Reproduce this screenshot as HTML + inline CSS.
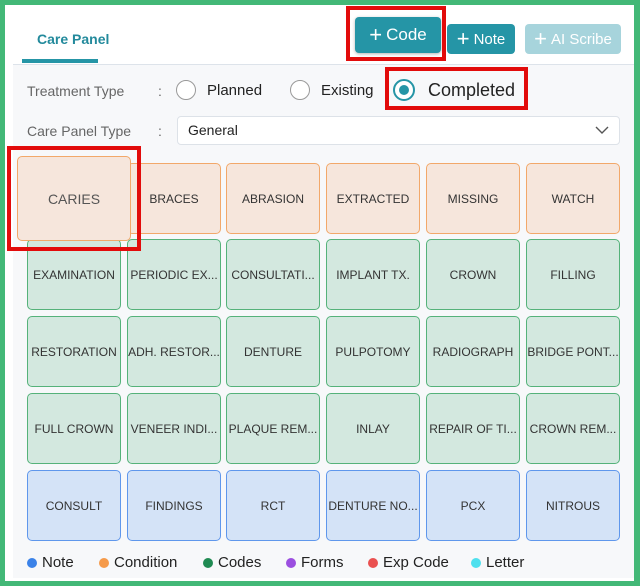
<!DOCTYPE html>
<html><head><style>
*{box-sizing:border-box;margin:0;padding:0}
body{width:640px;height:586px;background:#43b877;position:relative;font-family:"Liberation Sans",sans-serif;overflow:hidden}
.panel{position:absolute;left:5px;top:5px;width:629px;height:576px;background:#fff}
.gray{position:absolute;left:13px;top:64px;width:621px;height:514px;background:#f7f8fa;border-top:1px solid #dde3ea}
.a{position:absolute}
.tab{left:37px;top:31px;font-size:14px;font-weight:bold;color:#238a9c}
.ul{left:22px;top:59px;width:76px;height:4px;background:#2595a6}
.btn{position:absolute;color:#fff;border-radius:4px;font-size:15px;display:flex;align-items:center;justify-content:center;gap:4px}
.btn b{font-weight:normal;font-size:22px;line-height:1}
.red{position:absolute;border:4px solid #e20b0b}
.lbl{font-size:14px;color:#666}
.rad{position:absolute;width:20px;height:20px;border:1px solid #999;border-radius:50%;background:#fff}
.rt{font-size:15px;color:#222}
.cell{position:absolute;width:94px;height:71px;border-radius:5px;display:flex;align-items:center;justify-content:center;font-size:12px;color:#333;white-space:nowrap;overflow:hidden}
.o{background:#f6e6dc;border:1px solid #f2a86a}
.g{background:#d3e8df;border:1px solid #55b27a}
.b{background:#d4e3f7;border:1px solid #5f97ec}
.leg{position:absolute;top:554px;font-size:15px;color:#222;display:flex;align-items:center;gap:5px}
.leg i{display:inline-block;width:10px;height:10px;border-radius:50%}
</style></head><body>
<div class="panel"></div>
<div class="gray"></div>
<div class="a tab">Care Panel</div>
<div class="a ul"></div>

<div class="btn" style="left:355px;top:17px;width:86px;height:36px;background:#2595a6;font-size:17px;box-shadow:0 1px 3px rgba(0,0,0,.3)"><b>+</b>Code</div>
<div class="red" style="left:346px;top:6px;width:100px;height:55px"></div>
<div class="btn" style="left:447px;top:24px;width:68px;height:30px;background:#2595a6"><b>+</b>Note</div>
<div class="btn" style="left:525px;top:24px;width:96px;height:30px;background:#a7d4dc"><b>+</b>AI Scribe</div>

<div class="a lbl" style="left:27px;top:83px">Treatment Type</div>
<div class="a lbl" style="left:158px;top:83px">:</div>
<div class="rad" style="left:176px;top:80px"></div>
<div class="a rt" style="left:207px;top:82px">Planned</div>
<div class="rad" style="left:290px;top:80px"></div>
<div class="a rt" style="left:321px;top:82px">Existing</div>
<div class="rad" style="left:393px;top:79px;width:22px;height:22px;border:2px solid #2595a6"><div style="position:absolute;left:4px;top:4px;width:10px;height:10px;border-radius:50%;background:#2595a6"></div></div>
<div class="a" style="left:428px;top:80px;font-size:18px;color:#222">Completed</div>
<div class="red" style="left:385px;top:67px;width:143px;height:43px"></div>

<div class="a lbl" style="left:27px;top:123px">Care Panel Type</div>
<div class="a lbl" style="left:158px;top:123px">:</div>
<div class="a" style="left:177px;top:116px;width:443px;height:29px;background:#fff;border:1px solid #dde2e8;border-radius:4px"></div>
<div class="a rt" style="left:188px;top:122px;font-size:14px">General</div>
<svg class="a" style="left:595px;top:125px" width="14" height="10"><path d="M1 2l6 6 6-6" fill="none" stroke="#555" stroke-width="1.4"/></svg>

<div class="cell o" style="left:127px;top:163px">BRACES</div>
<div class="cell o" style="left:226px;top:163px">ABRASION</div>
<div class="cell o" style="left:326px;top:163px">EXTRACTED</div>
<div class="cell o" style="left:426px;top:163px">MISSING</div>
<div class="cell o" style="left:526px;top:163px">WATCH</div>

<div class="cell g" style="left:27px;top:239px">EXAMINATION</div>
<div class="cell g" style="left:127px;top:239px">PERIODIC EX...</div>
<div class="cell g" style="left:226px;top:239px">CONSULTATI...</div>
<div class="cell g" style="left:326px;top:239px">IMPLANT TX.</div>
<div class="cell g" style="left:426px;top:239px">CROWN</div>
<div class="cell g" style="left:526px;top:239px">FILLING</div>

<div class="cell o" style="left:17px;top:156px;width:114px;height:85px;font-size:14px;color:#555">CARIES</div>
<div class="red" style="left:7px;top:146px;width:134px;height:105px"></div>

<div class="cell g" style="left:27px;top:316px">RESTORATION</div>
<div class="cell g" style="left:127px;top:316px">ADH. RESTOR...</div>
<div class="cell g" style="left:226px;top:316px">DENTURE</div>
<div class="cell g" style="left:326px;top:316px">PULPOTOMY</div>
<div class="cell g" style="left:426px;top:316px">RADIOGRAPH</div>
<div class="cell g" style="left:526px;top:316px">BRIDGE PONT...</div>

<div class="cell g" style="left:27px;top:393px">FULL CROWN</div>
<div class="cell g" style="left:127px;top:393px">VENEER INDI...</div>
<div class="cell g" style="left:226px;top:393px">PLAQUE REM...</div>
<div class="cell g" style="left:326px;top:393px">INLAY</div>
<div class="cell g" style="left:426px;top:393px">REPAIR OF TI...</div>
<div class="cell g" style="left:526px;top:393px">CROWN REM...</div>

<div class="cell b" style="left:27px;top:470px">CONSULT</div>
<div class="cell b" style="left:127px;top:470px">FINDINGS</div>
<div class="cell b" style="left:226px;top:470px">RCT</div>
<div class="cell b" style="left:326px;top:470px">DENTURE NO...</div>
<div class="cell b" style="left:426px;top:470px">PCX</div>
<div class="cell b" style="left:526px;top:470px">NITROUS</div>

<div class="leg" style="left:27px"><i style="background:#3b82e8"></i>Note</div>
<div class="leg" style="left:99px"><i style="background:#f59a4a"></i>Condition</div>
<div class="leg" style="left:203px"><i style="background:#1f8a52"></i>Codes</div>
<div class="leg" style="left:286px"><i style="background:#9b4fe0"></i>Forms</div>
<div class="leg" style="left:368px"><i style="background:#ea5050"></i>Exp Code</div>
<div class="leg" style="left:471px"><i style="background:#4ee0ee"></i>Letter</div>
</body></html>
